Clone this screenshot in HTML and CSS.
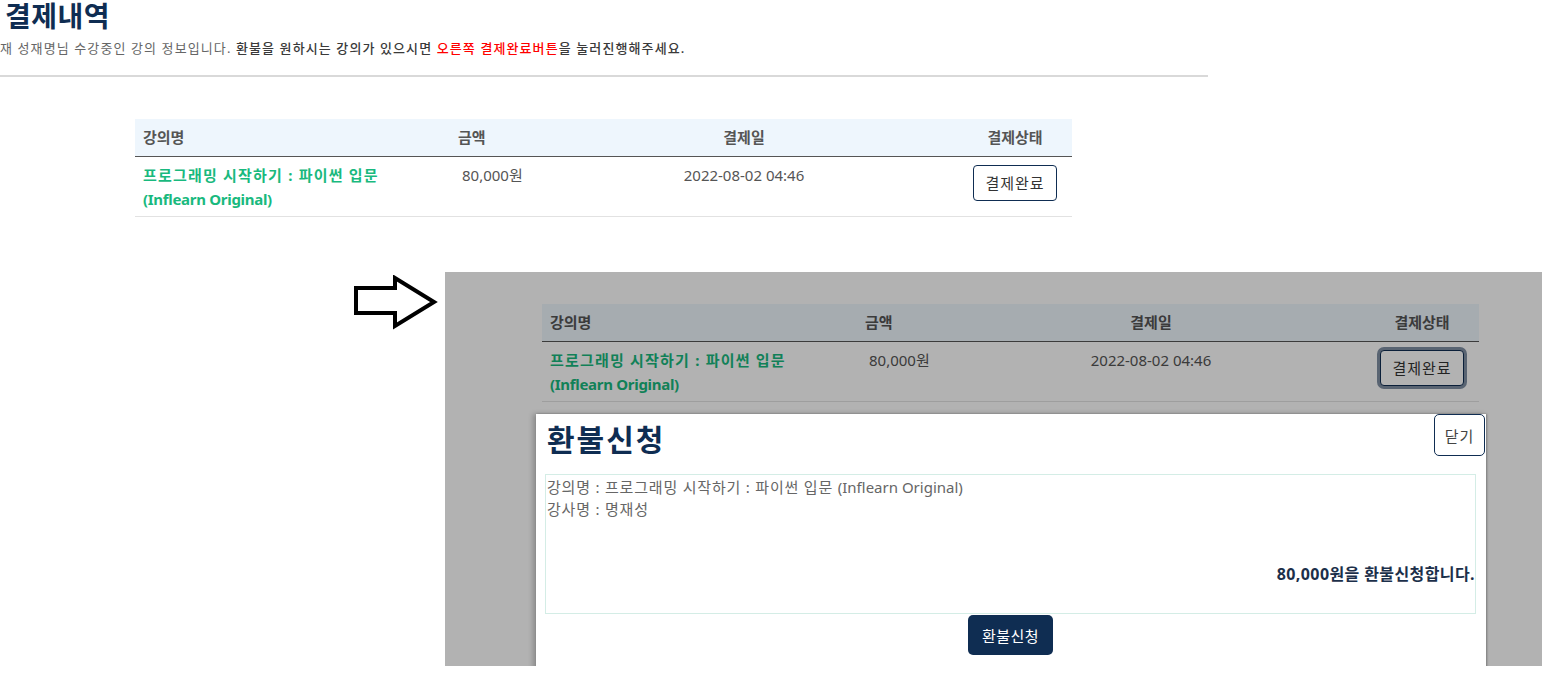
FILE: index.html
```html
<!DOCTYPE html>
<html lang="ko">
<head>
<meta charset="utf-8">
<title>결제내역</title>
<link rel="stylesheet" href="styles.css">
</head>
<body>
<section class="history">
  <h1 class="page-title">결제내역</h1>
  <p class="lead"><span class="lead-muted">재 성재명님 수강중인 강의 정보입니다.</span> <span class="lead-strong">환불을 원하시는 강의가 있으시면 <em class="lead-red">오른쪽 결제완료버튼</em>을 눌러진행해주세요.</span></p>
  <hr class="divider">
  <table class="pay-table">
    <colgroup><col class="c1"><col class="c2"><col class="c3"><col class="c4"></colgroup>
    <thead>
      <tr><th class="th-left">강의명</th><th class="th-left">금액</th><th class="th-center">결제일</th><th class="th-center">결제상태</th></tr>
    </thead>
    <tbody>
      <tr>
        <td class="course">프로그래밍 시작하기 : 파이썬 입문<br><span class="latin">(Inflearn Original)</span></td>
        <td class="price">80,000원</td>
        <td class="date">2022-08-02 04:46</td>
        <td class="status"><button class="btn-outline">결제완료</button></td>
      </tr>
    </tbody>
  </table>
</section>

<section class="demo">
  <svg class="arrow" width="84" height="56" viewBox="0 0 84 56" aria-hidden="true">
    <path d="M2 13 H41 V3 L80 27 L41 51 V38 H2 Z" fill="#fff" stroke="#000" stroke-width="4" stroke-linejoin="miter"/>
  </svg>
  <div class="shot">
    <table class="pay-table inner">
      <colgroup><col class="c1"><col class="c2"><col class="c3"><col class="c4"></colgroup>
      <thead>
        <tr><th class="th-left">강의명</th><th class="th-left">금액</th><th class="th-center">결제일</th><th class="th-center">결제상태</th></tr>
      </thead>
      <tbody>
        <tr>
          <td class="course">프로그래밍 시작하기 : 파이썬 입문<br><span class="latin">(Inflearn Original)</span></td>
          <td class="price">80,000원</td>
          <td class="date">2022-08-02 04:46</td>
          <td class="status"><button class="btn-outline focused">결제완료</button></td>
        </tr>
      </tbody>
    </table>
    <div class="backdrop"></div>
    <div class="modal">
      <h2 class="modal-title">환불신청</h2>
      <button class="btn-close">닫기</button>
      <div class="refund-box">
        <div class="refund-line">강의명 : 프로그래밍 시작하기 : 파이썬 입문 <span class="latin-reg">(Inflearn Original)</span></div>
        <div class="refund-line">강사명 : 명재성</div>
        <div class="refund-total">80,000원을 환불신청합니다.</div>
      </div>
      <div class="modal-actions"><button class="btn-primary">환불신청</button></div>
    </div>
  </div>
</section>
</body>
</html>
```

FILE: styles.css
```css
* { box-sizing: border-box; }
html, body { margin: 0; padding: 0; background: #fff; }
body {
  font-family: "Noto Sans", "Noto Sans CJK KR", sans-serif;
  color: #333;
  overflow: hidden;
}

.history { padding-top: 2px; }

.page-title {
  margin: 0;
  padding-left: 5px;
  font-size: 28px;
  line-height: 28px;
  font-weight: 700;
  letter-spacing: 0.5px;
  color: #0f2d52;
}

.lead {
  margin: 8px 0 0;
  font-size: 13px;
  line-height: 20px;
  letter-spacing: 1.1px;
  white-space: nowrap;
}
.lead-muted { color: #666; }
.lead-strong { color: #3a3a3a; font-weight: 500; }
.lead-red { color: #ff0000; font-style: normal; font-weight: 500; }

.divider {
  margin: 17px 0 0;
  width: 1208px;
  height: 2px;
  border: 0;
  background: #d9d9d9;
}

.pay-table {
  margin: 42px 0 0 135px;
  width: 937px;
  border-collapse: collapse;
  table-layout: fixed;
  font-size: 15px;
}
.pay-table .c1 { width: 315px; }
.pay-table .c2 { width: 80px; }
.pay-table .c3 { width: 428px; }
.pay-table .c4 { width: 114px; }

.pay-table th {
  height: 37px;
  padding: 0 8px;
  background: #eef6fd;
  color: #555;
  font-weight: 700;
  line-height: 37px;
  border-bottom: 1px solid #555;
  white-space: nowrap;
}
.th-left { text-align: left; }
.th-center { text-align: center; }

.pay-table td {
  padding: 6px 8px 5px;
  vertical-align: top;
  line-height: 24px;
  border-bottom: 1px solid #e2e2e2;
  color: #555;
  white-space: nowrap;
}
.pay-table td.course { color: #19b97e; font-weight: 700; letter-spacing: 1.2px; }
.pay-table td.course .latin { letter-spacing: -0.3px; }
.pay-table td.price { padding-left: 12px; }
.pay-table td.date { text-align: center; }
.pay-table td.status { text-align: center; padding-left: 0; padding-right: 0; }

.btn-outline {
  margin-top: 2px;
  height: 36px;
  padding: 0 11px;
  border: 1px solid #0f2d52;
  border-radius: 4px;
  background: #fff;
  color: #333;
  font: inherit;
  font-size: 15px;
  line-height: 34px;
  letter-spacing: 1px;
}
.btn-outline.focused { box-shadow: 0 0 0 3px #8090a4; }

.demo {
  display: flex;
  align-items: flex-start;
  gap: 7px;
  margin-top: 55px;
  padding-left: 354px;
}
.arrow { display: block; margin-top: 3px; flex: none; }

.shot {
  position: relative;
  width: 1097px;
  height: 394px;
  overflow: hidden;
  background: #fff;
  padding: 32px 0 0 97px;
  flex: none;
}
.shot .pay-table { margin: 0; }

.backdrop {
  position: absolute;
  inset: 0;
  background: rgba(0, 0, 0, 0.3);
}

.modal {
  position: absolute;
  left: 91px;
  top: 142px;
  width: 950px;
  height: 300px;
  background: #fff;
  padding: 6px 10px 0 9px;
  box-shadow: -3px 0 5px rgba(0, 0, 0, 0.22), 1px 0 2px rgba(0, 0, 0, 0.3);
}
.modal-title {
  margin: 0 0 14px;
  padding-left: 2px;
  font-size: 30px;
  line-height: 40px;
  font-weight: 700;
  letter-spacing: 2px;
  color: #0f2d52;
}
.btn-close {
  position: absolute;
  top: 0;
  right: 1px;
  width: 51px;
  height: 42px;
  padding: 0;
  border: 1px solid #0f2d52;
  border-radius: 5px;
  background: #fff;
  color: #444;
  font: inherit;
  font-size: 15px;
  letter-spacing: 1px;
}

.refund-box {
  display: flex;
  flex-direction: column;
  height: 140px;
  padding: 1px 0 0 1px;
  border: 1px solid #d4ede6;
  font-size: 15px;
  line-height: 22px;
  color: #666;
  letter-spacing: 0.8px;
}
.refund-box .latin-reg { letter-spacing: 0; }
.refund-total {
  margin-top: 43px;
  text-align: right;
  font-size: 16px;
  font-weight: 700;
  letter-spacing: 0.4px;
  color: #1c2f4a;
}

.modal-actions {
  display: flex;
  justify-content: center;
  padding-top: 1px;
}
.btn-primary {
  height: 40px;
  width: 85px;
  padding: 0;
  border: 0;
  border-radius: 5px;
  background: #0f2d52;
  color: #fff;
  font: inherit;
  font-size: 15px;
  letter-spacing: 0.5px;
}
```
